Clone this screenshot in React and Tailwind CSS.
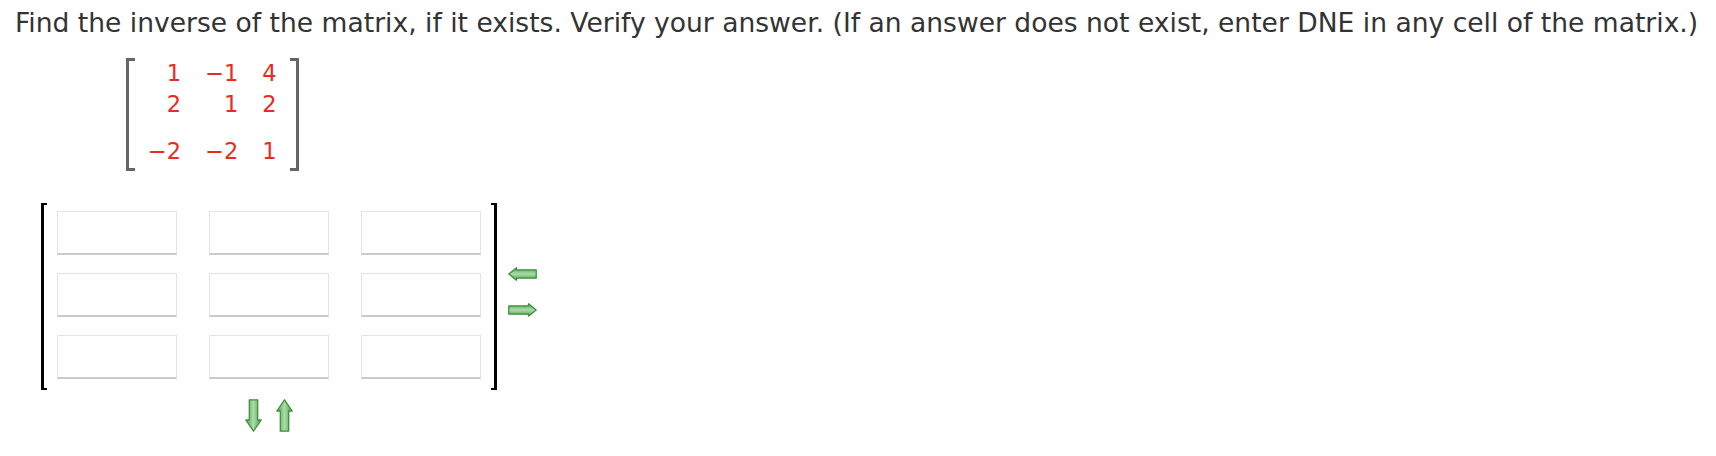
import React from 'react';

const given = [
  ['1', '\u22121', '4'],
  ['2', '1', '2'],
  ['\u22122', '\u22122', '1'],
];

function HArrow({ dir }) {
  const pts =
    dir === 'left'
      ? '0.8,7 8.5,0.8 8.5,2.8 28.2,2.8 28.2,11.2 8.5,11.2 8.5,13.2'
      : '28.2,7 20.5,0.8 20.5,2.8 0.8,2.8 0.8,11.2 20.5,11.2 20.5,13.2';
  const id = `h-${dir}`;
  return (
    <svg width="29" height="14" viewBox="0 0 29 14" className="block">
      <defs>
        <linearGradient id={id} x1="0" y1="0" x2="0" y2="1">
          <stop offset="0" stopColor="#4fa64f" />
          <stop offset="0.5" stopColor="#a9dca9" />
          <stop offset="1" stopColor="#48a048" />
        </linearGradient>
      </defs>
      <polygon points={pts} fill={`url(#${id})`} stroke="#3f8f3f" strokeWidth="1.3" strokeLinejoin="round" />
    </svg>
  );
}

function VArrow({ dir }) {
  const pts =
    dir === 'down'
      ? '4.3,0.8 12.7,0.8 12.7,21 16.2,21 8.5,32.2 0.8,21 4.3,21'
      : '4.3,32.2 12.7,32.2 12.7,12 16.2,12 8.5,0.8 0.8,12 4.3,12';
  const id = `v-${dir}`;
  return (
    <svg width="17" height="33" viewBox="0 0 17 33" className="block">
      <defs>
        <linearGradient id={id} x1="0" y1="0" x2="1" y2="0">
          <stop offset="0" stopColor="#4fa64f" />
          <stop offset="0.5" stopColor="#a9dca9" />
          <stop offset="1" stopColor="#48a048" />
        </linearGradient>
      </defs>
      <polygon points={pts} fill={`url(#${id})`} stroke="#3f8f3f" strokeWidth="1.3" strokeLinejoin="round" />
    </svg>
  );
}

export default function App() {
  return (
    <div className="min-h-[456px] bg-white px-[15px] pt-[8px] text-[#333]" style={{ fontFamily: '"DejaVu Sans", Verdana, sans-serif' }}>
      <p className="text-[26.55px] leading-[30px] whitespace-nowrap">
        Find the inverse of the matrix, if it exists. Verify your answer. (If an answer does not exist, enter DNE in any cell of the matrix.)
      </p>

      {/* given matrix */}
      <div className="ml-[111px] mt-[20px] flex w-max">
        <div className="w-[9px] border-l-[3px] border-y-[3px] border-[#666]" />
        <div className="grid grid-cols-[auto_auto_auto] gap-x-[24px] px-[13px] pb-[4px] text-[22.5px] leading-[31px] text-[#ec2b1f] text-right">
          {given.map((row, r) =>
            row.map((v, c) => (
              <span key={`${r}-${c}`} className={r === 2 ? 'mt-[16px]' : ''}>
                {v}
              </span>
            ))
          )}
        </div>
        <div className="w-[9px] border-r-[3px] border-y-[3px] border-[#666]" />
      </div>

      {/* answer matrix */}
      <div className="ml-[26px] mt-[32px] flex items-start">
        <div className="flex flex-col items-center">
          <div className="flex">
            <div className="w-[6px] border-l-[3px] border-y-[2px] border-black" />
            <div className="grid grid-cols-[120px_120px_120px] gap-x-[32px] gap-y-[18px] pl-[10px] pr-[10px] pt-[8px] pb-[11px]">
              {Array.from({ length: 9 }).map((_, i) => (
                <input
                  key={i}
                  type="text"
                  className="h-[44px] w-[120px] border border-[#e4e4e4] border-b-2 border-b-[#cbcbcb] bg-white outline-none"
                />
              ))}
            </div>
            <div className="w-[6px] border-r-[3px] border-y-[2px] border-black" />
          </div>
          <div className="mt-[9px] flex gap-[14px]">
            <VArrow dir="down" />
            <VArrow dir="up" />
          </div>
        </div>
        <div className="ml-[11px] mt-[64px] flex flex-col gap-[22px]">
          <HArrow dir="left" />
          <HArrow dir="right" />
        </div>
      </div>
    </div>
  );
}
